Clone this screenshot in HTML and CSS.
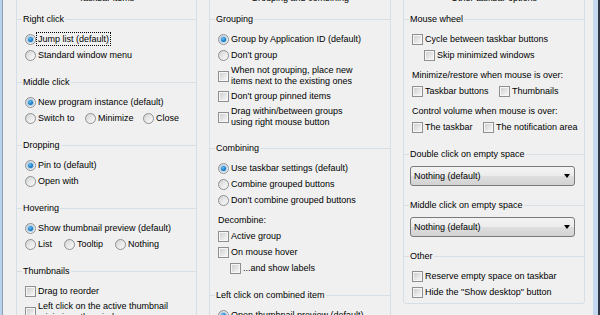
FILE: index.html
```html
<!DOCTYPE html>
<html lang="en">
<head>
<meta charset="utf-8">
<title>Taskbar Tweaker</title>
<link rel="stylesheet" href="styles.css">
</head>
<body>
<div class="win">
  <div class="client">
    <div class="cols">
      <div class="col">
        <div class="col-title"><span>Taskbar items</span></div>
        <div class="sec first">
          <div class="sec-title">Right click</div>
          <div class="opt"><span class="rb on"></span><span class="focus">Jump list (default)</span></div>
          <div class="opt"><span class="rb"></span>Standard window menu</div>
        </div>
        <div class="sec">
          <div class="sec-title">Middle click</div>
          <div class="opt"><span class="rb on"></span>New program instance (default)</div>
          <div class="opt">
            <div class="item w60"><span class="rb"></span>Switch to</div>
            <div class="item w58"><span class="rb"></span>Minimize</div>
            <div class="item"><span class="rb"></span>Close</div>
          </div>
        </div>
        <div class="sec">
          <div class="sec-title">Dropping</div>
          <div class="opt"><span class="rb on"></span>Pin to (default)</div>
          <div class="opt"><span class="rb"></span>Open with</div>
        </div>
        <div class="sec">
          <div class="sec-title">Hovering</div>
          <div class="opt"><span class="rb on"></span>Show thumbnail preview (default)</div>
          <div class="opt">
            <div class="item w39"><span class="rb"></span>List</div>
            <div class="item w51"><span class="rb"></span>Tooltip</div>
            <div class="item"><span class="rb"></span>Nothing</div>
          </div>
        </div>
        <div class="sec">
          <div class="sec-title">Thumbnails</div>
          <div class="opt"><span class="cb"></span>Drag to reorder</div>
          <div class="opt wrap"><span class="cb"></span><span>Left click on the active thumbnail<br>minimizes the window</span></div>
          <div class="opt"><span class="cb"></span>Scroll through thumbnails</div>
        </div>
      </div>

      <div class="col">
        <div class="col-title"><span>Grouping and combining</span></div>
        <div class="sec first">
          <div class="sec-title">Grouping</div>
          <div class="opt"><span class="rb on"></span>Group by Application ID (default)</div>
          <div class="opt"><span class="rb"></span>Don't group</div>
          <div class="opt wrap"><span class="cb"></span><span>When not grouping, place new<br>items next to the existing ones</span></div>
          <div class="opt"><span class="cb"></span>Don't group pinned items</div>
          <div class="opt wrap"><span class="cb"></span><span>Drag within/between groups<br>using right mouse button</span></div>
        </div>
        <div class="sec">
          <div class="sec-title">Combining</div>
          <div class="opt"><span class="rb on"></span>Use taskbar settings (default)</div>
          <div class="opt"><span class="rb"></span>Combine grouped buttons</div>
          <div class="opt"><span class="rb"></span>Don't combine grouped buttons</div>
          <div class="lbl">Decombine:</div>
          <div class="opt"><span class="cb"></span>Active group</div>
          <div class="opt"><span class="cb"></span>On mouse hover</div>
          <div class="opt sub"><span class="cb"></span>...and show labels</div>
        </div>
        <div class="sec">
          <div class="sec-title">Left click on combined item</div>
          <div class="opt"><span class="rb on"></span>Open thumbnail preview (default)</div>
          <div class="opt"><span class="rb"></span>Switch to last window</div>
        </div>
      </div>

      <div class="col">
        <div class="col-title"><span>Other taskbar options</span></div>
        <div class="sec first">
          <div class="sec-title">Mouse wheel</div>
          <div class="opt"><span class="cb"></span>Cycle between taskbar buttons</div>
          <div class="opt sub"><span class="cb"></span>Skip minimized windows</div>
          <div class="lbl">Minimize/restore when mouse is over:</div>
          <div class="opt">
            <div class="item w87"><span class="cb"></span>Taskbar buttons</div>
            <div class="item"><span class="cb"></span>Thumbnails</div>
          </div>
          <div class="lbl">Control volume when mouse is over:</div>
          <div class="opt">
            <div class="item w71"><span class="cb"></span>The taskbar</div>
            <div class="item"><span class="cb"></span>The notification area</div>
          </div>
        </div>
        <div class="sec">
          <div class="sec-title">Double click on empty space</div>
          <div class="dd"><span>Nothing (default)</span><span class="arrow"></span></div>
        </div>
        <div class="sec">
          <div class="sec-title">Middle click on empty space</div>
          <div class="dd"><span>Nothing (default)</span><span class="arrow"></span></div>
        </div>
        <div class="sec last">
          <div class="sec-title">Other</div>
          <div class="opt"><span class="cb"></span>Reserve empty space on taskbar</div>
          <div class="opt"><span class="cb"></span>Hide the "Show desktop" button</div>
        </div>
      </div>
    </div>
  </div>
</div>
</body>
</html>
```
FILE: styles.css
```css
html, body {
  margin: 0;
  padding: 0;
  height: 315px;
  overflow: hidden;
  background: #f0f0f0;
}
body {
  font-family: "Liberation Sans", Arial, sans-serif;
  font-size: 9px;
  color: #000;
}
.win {
  display: flex;
  height: 315px;
  box-sizing: border-box;
  border-left: 2px solid #bad1eb;
  border-right: 2px solid #2e3745;
}
.client {
  flex: 1;
  overflow: hidden;
  border-left: 1px solid #8aa0b9;
  border-right: 5px solid #c4d9f0;
  padding-left: 13px;
}
.cols {
  display: grid;
  grid-template-columns: 181px 182px 182px;
  column-gap: 12px;
  align-items: start;
}
.col {
  border: 1px solid #d5dfe5;
  border-radius: 3px;
  margin-top: -2px;
}
.col-title {
  margin-top: -7px;
  line-height: 12px;
  text-align: center;
}
.col-title span {
  background: #f0f0f0;
  padding: 0 2px;
}
.sec {
  border-top: 1px solid #d5dfe5;
  padding-left: 8px;
  margin-top: 19px;
}
.sec.first {
  margin-top: 15px;
}
.sec.last {
  padding-bottom: 3px;
}
.sec-title {
  display: table;
  margin: -7px 0 6px -3px;
  padding: 0 1px;
  line-height: 12px;
  background: #f0f0f0;
}
.opt {
  display: flex;
  align-items: center;
  height: 16px;
  line-height: 16px;
  white-space: nowrap;
}
.opt.wrap {
  height: auto;
  line-height: 11px;
  padding: 2px 0 1px;
}
.opt.sub {
  padding-left: 12px;
}
.item {
  display: flex;
  align-items: center;
}
.w60 { width: 60px; }
.w58 { width: 58px; }
.w39 { width: 39px; }
.w51 { width: 51px; }
.w87 { width: 87px; }
.w71 { width: 71px; }
.lbl {
  margin-top: 4px;
  height: 16px;
  line-height: 16px;
  white-space: nowrap;
}
.rb {
  box-sizing: border-box;
  flex: none;
  width: 11px;
  height: 11px;
  margin-right: 2px;
  border-radius: 50%;
  border: 1px solid #8d9195;
  background: linear-gradient(135deg, #cfd0d1 0%, #e9e9e9 50%, #fafafa 100%);
  display: flex;
  align-items: center;
  justify-content: center;
}
.rb.on::after {
  content: "";
  width: 5px;
  height: 5px;
  border-radius: 50%;
  background: radial-gradient(circle at 40% 35%, #6cc0f4 0%, #1a7cc4 55%, #0b4f8f 100%);
  box-shadow: 0 0 0 1px #a9d0ee;
}
.cb {
  box-sizing: border-box;
  flex: none;
  width: 11px;
  height: 11px;
  margin-right: 2px;
  border: 1px solid #8e8f8f;
  box-shadow: inset 0 0 0 1px #f6f6f6;
  background: linear-gradient(135deg, #c9cacb 0%, #e6e6e6 55%, #fbfbfb 100%);
}
.focus {
  outline: 1px dotted #000;
  padding: 1px 1px;
  margin-left: -1px;
  line-height: 10px;
}
.dd {
  box-sizing: border-box;
  width: 165px;
  height: 20px;
  margin-left: -2px;
  display: flex;
  align-items: center;
  justify-content: space-between;
  padding: 0 4px 0 3px;
  border: 1px solid #7a7a7a;
  border-radius: 3px;
  background: linear-gradient(#f4f4f4 0%, #ececec 48%, #dedede 52%, #d2d2d2 100%);
  line-height: 18px;
}
.arrow {
  width: 0;
  height: 0;
  border-left: 3px solid transparent;
  border-right: 3px solid transparent;
  border-top: 4px solid #000;
}
```
